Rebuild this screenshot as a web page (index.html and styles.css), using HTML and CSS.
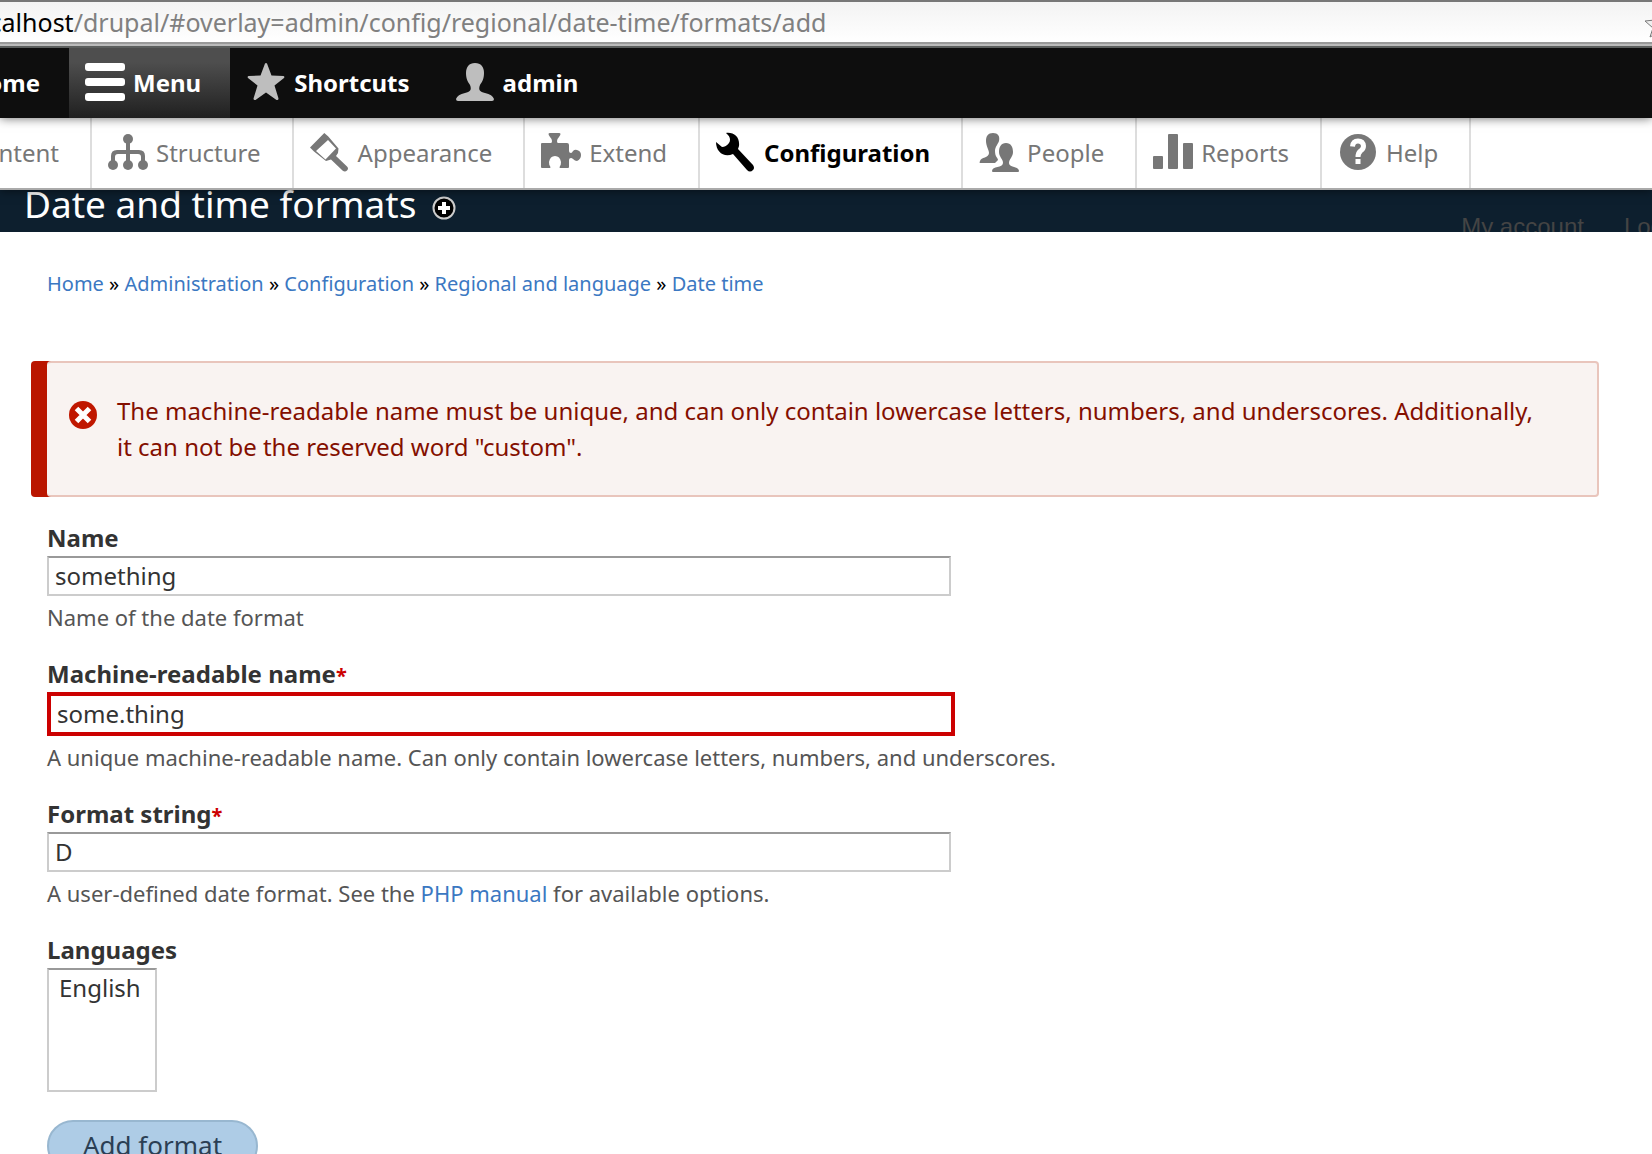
FILE: index.html
```
<!DOCTYPE html>
<html lang="en">
<head>
    <meta charset="UTF-8">
    <meta name="viewport" content="width=device-width, initial-scale=1.0">
    <title>Date and time formats</title>
    <link rel="stylesheet" href="styles.css">
</head>
<body>
    <div class="address-bar">
        <div class="url"><span class="host">localhost</span>/drupal/#overlay=admin/config/regional/date-time/formats/add</div>
        <svg class="bookmark" viewBox="0 0 30 28" aria-hidden="true">
            <path d="M15 1l4 9 10 1-8 7 3 9-9-5-9 5 3-9-8-7 10-1z"/>
        </svg>
    </div>

    <!-- Top toolbar -->
    <nav class="toolbar">
        <a class="tab tab-first" href="#">Home</a>
        <a class="tab active" href="#">
            <svg class="icon" viewBox="0 0 40 40" aria-hidden="true">
                <rect x="0" y="1" width="40" height="8" rx="3"/>
                <rect x="0" y="16" width="40" height="8" rx="3"/>
                <rect x="0" y="31" width="40" height="8" rx="3"/>
            </svg>
            Menu
        </a>
        <a class="tab" href="#">
            <svg class="icon" viewBox="0 0 40 40" aria-hidden="true">
                <path d="M19 1.500q1-1 2 0l4.500 12 12 .5q1.500.5.500 2l-9.500 7.500 4 13q0 2-2 1.500L20 30.500 9.500 38q-2 .5-2-1.500l4-13L2 16q-1-1.500.5-2l12-.5z"/>
            </svg>
            Shortcuts
        </a>
        <a class="tab" href="#">
            <svg class="icon" viewBox="0 0 40 40" aria-hidden="true">
                <path d="M20 1c6 0 9 4 9 10 0 6-2 9-4 12-2 5 0 7 5 8 5 1 8 3 9 6q0 2-2 2H3q-2 0-2-2c1-3 4-5 9-6 5-1 7-3 5-8-2-3-4-6-4-12 0-6 3-10 9-10z"/>
            </svg>
            admin
        </a>
    </nav>

    <!-- Administration menu -->
    <nav class="tray">
        <a class="item item-first" href="#">Content</a>
        <a class="item" href="#">
            <svg class="icon" viewBox="0 0 40 40" aria-hidden="true">
                <circle cx="20" cy="7" r="5"/>
                <path d="M18 10h4v8h9q6 0 6 6v6h-4v-5q0-3-3-3h-8v8h-4v-8h-8q-3 0-3 3v5H3v-6q0-6 6-6h9z"/>
                <circle cx="5" cy="33" r="5"/>
                <circle cx="20" cy="33" r="5"/>
                <circle cx="35" cy="33" r="5"/>
            </svg>
            Structure
        </a>
        <a class="item" href="#">
            <svg class="icon" viewBox="0 0 40 40" aria-hidden="true">
                <path fill-rule="evenodd" d="M0 15.500L14.300 1l4 3.500L28.500 16.500 28 21l-2 3 11 10.500q2 2 0 4t-4.500 0L21 27.500 16 29 4 19.500zM6 19l9.500 8.500L26 16.500 18 8z"/>
            </svg>
            Appearance
        </a>
        <a class="item" href="#">
            <svg class="icon" viewBox="0 0 40 40" aria-hidden="true">
                <path d="M1 11h9q1 0 1-2 0-2-2-4-3-4 0-4h9q3 0 0 4-2 2-2 4 0 2 1 2h9q2 0 2 2v6q0 2 2 2 1 0 2-2 2-2 4-1 4 1 4 5t-4 6q-2 0-4-2-1-1-2-1-2 0-2 2v7q0 1-1 1h-8q-1 0 0-2 1-1 1-4-1-6-6-6t-6 6q0 3 1 4 1 2 0 2H1q-1 0-1-1V12q0-1 1-1z"/>
            </svg>
            Extend
        </a>
        <a class="item current" href="#">
            <svg class="icon" viewBox="0 0 40 40" aria-hidden="true">
                <path d="M10 1c8-1 14 4 13 13l-1 3 15 16q2 3 0 5-3 3-6 0L17 22C8 26 0 20 0 10l6 5q4 0 7-4 3-5-3-10z"/>
            </svg>
            Configuration
        </a>
        <a class="item" href="#">
            <svg class="icon" viewBox="0 0 40 40" aria-hidden="true">
                <path d="M14 1c5 0 7 3 6 8-1 3-4 6-4 10 0 6 3 7 3 9l-3 3H1q-1 0 0-2c1-4 9-3 9-8 0-3-3-7-3-12 0-5 2-8 7-8z"/>
                <path class="front" d="M27 11c5 0 7 4 7 9s-4 7-4 11c0 5 10 3 10 8q0 1-1 1H14q-1 0-1-1c0-5 11-3 11-8 0-4-4-6-4-11s2-9 7-9z"/>
            </svg>
            People
        </a>
        <a class="item" href="#">
            <svg class="icon" viewBox="0 0 40 40" aria-hidden="true">
                <rect x="0" y="24" width="10" height="13" rx="1"/>
                <rect x="15" y="2" width="10" height="35" rx="1"/>
                <rect x="30" y="11" width="10" height="26" rx="1"/>
            </svg>
            Reports
        </a>
        <a class="item" href="#">
            <svg class="icon" viewBox="0 0 40 40" aria-hidden="true">
                <circle cx="20" cy="20" r="18"/>
                <path class="mark" d="M14.500 14.500Q15 9 20 9t5.500 5q0 3-3 5-2.500 2-2.500 6M20 27v5"/>
            </svg>
            Help
        </a>
    </nav>

    <header class="overlay-header">
        <h1 class="title">Date and time formats</h1>
        <button class="add-shortcut" aria-label="Add to shortcuts">
            <svg viewBox="0 0 24 24" aria-hidden="true">
                <circle cx="12" cy="12" r="10.500"/>
                <path d="M12 6v12M6 12h12"/>
            </svg>
        </button>
        <div class="user-links">
            <a href="#">My account</a>
            <a href="#">Log out</a>
        </div>
    </header>

    <main class="content">
        <div class="breadcrumb">
            <a href="#">Home</a> » <a href="#">Administration</a> » <a href="#">Configuration</a> » <a href="#">Regional and language</a> » <a href="#">Date time</a>
        </div>

        <div class="message" role="alert">
            <svg class="message-icon" viewBox="0 0 28 28" aria-hidden="true">
                <circle cx="14" cy="14" r="14"/>
                <path d="M7.500 7.500l13 13M20.500 7.500l-13 13"/>
            </svg>
            <p>The machine-readable name must be unique, and can only contain lowercase letters, numbers, and underscores. Additionally, it can not be the reserved word "custom".</p>
        </div>

        <form class="form">
            <div class="form-item">
                <label for="name">Name</label>
                <input type="text" id="name" value="something">
                <div class="description">Name of the date format</div>
            </div>
            <div class="form-item">
                <label for="machine-name">Machine-readable name<span class="required">*</span></label>
                <input type="text" id="machine-name" class="error" value="some.thing">
                <div class="description">A unique machine-readable name. Can only contain lowercase letters, numbers, and underscores.</div>
            </div>
            <div class="form-item">
                <label for="format">Format string<span class="required">*</span></label>
                <input type="text" id="format" value="D">
                <div class="description">A user-defined date format. See the <a href="#">PHP manual</a> for available options.</div>
            </div>
            <div class="form-item">
                <label for="languages">Languages</label>
                <select id="languages" multiple size="4">
                    <option>English</option>
                </select>
            </div>
            <button class="submit" type="submit">Add format</button>
        </form>
    </main>
</body>
</html>
```

FILE: styles.css
```
* {
    box-sizing: border-box;
}

body {
    margin: 0;
    height: 100vh;
    overflow: hidden;
    background: #fff;
    color: #000;
    font-family: "Noto Sans", "Open Sans", sans-serif;
    font-size: 24px;
}

a {
    color: #3b78c2;
    text-decoration: none;
}

/* Browser address bar */
.address-bar {
    display: flex;
    align-items: center;
    position: relative;
    z-index: 3;
    height: 48px;
    overflow: hidden;
    border-top: 2px solid #777;
    border-bottom: 2px solid #5c5f5e;
    background: linear-gradient(#f3f3f3, #fff 40px, #999 40px, #999 42px, #bbb 42px);
}

.url {
    flex: 1;
    margin-left: -32px;
    padding-bottom: 4px;
    color: #808080;
    font-size: 25px;
    white-space: nowrap;
}

.host {
    color: #000;
}

.bookmark {
    flex: none;
    width: 30px;
    height: 28px;
    margin-right: -22px;
    fill: #eee;
    stroke: #777;
}

/* Toolbar */
.toolbar {
    display: flex;
    position: relative;
    z-index: 2;
    height: 70px;
    background: #0e0e0e;
    box-shadow: 0 0 10px rgba(0, 0, 0, 0.6);
}

.tab,
.item {
    display: flex;
    align-items: center;
    gap: 8px;
    padding: 0 31px 2px 16px;
    white-space: nowrap;
}

.tab {
    padding-right: 29px;
    color: #fff;
    font-weight: bold;
    fill: #bebebe;
}

.tab.active {
    background: linear-gradient(#4e4e4e 20%, #202020);
    fill: #fff;
}

.tab-first,
.item-first {
    justify-content: flex-end;
    overflow: hidden;
    width: 69px;
}

.icon {
    flex: none;
    width: 40px;
    height: 40px;
}

.tray {
    display: flex;
    position: relative;
    z-index: 1;
    height: 72px;
    background: #fff;
    border-bottom: 2px solid #aaa;
    box-shadow: 0 0 10px rgba(0, 0, 0, 0.6);
}

.item {
    border-right: 2px solid #ddd;
    color: #777;
    fill: #777;
}

.item-first {
    width: 92px;
}

.item.current {
    color: #000;
    fill: #000;
    font-weight: bold;
}

.mark {
    fill: none;
    stroke: #fff;
    stroke-width: 5;
}

.front {
    stroke: #fff;
    stroke-width: 4;
    paint-order: stroke;
}

/* Overlay title */
.overlay-header {
    display: flex;
    align-items: center;
    height: 42px;
    padding-left: 24px;
    overflow: hidden;
    background: #0d1f2e;
}

.title {
    margin: 0;
    padding-bottom: 14px;
    color: #fff;
    font-size: 37px;
    font-weight: normal;
    line-height: 40px;
    white-space: nowrap;
}

.add-shortcut {
    width: 24px;
    height: 24px;
    margin: 0 0 6px 16px;
    padding: 0;
    border: 0;
    background: none;
}

.add-shortcut svg {
    display: block;
    fill: #000;
    stroke: #ccc;
    stroke-width: 2;
}

.add-shortcut path {
    stroke: #fff;
    stroke-width: 4;
}

.user-links {
    display: flex;
    gap: 40px;
    margin-left: auto;
    margin-right: -52px;
    padding-top: 32px;
    font-family: "Liberation Sans", sans-serif;
    font-size: 24px;
    white-space: nowrap;
}

.user-links a {
    color: #444;
}

/* Page */
.content {
    padding: 36px 53px 0 47px;
}

.breadcrumb {
    font-size: 20px;
    line-height: 32px;
}

.message {
    display: flex;
    gap: 20px;
    margin-top: 61px;
    padding: 30px 44px 30px 22px;
    border: 2px solid #e9c5bc;
    border-left: 0;
    border-radius: 4px;
    background: #f9f3f1;
    box-shadow: -16px 0 0 #ba1600;
    color: #840f00;
    line-height: 36px;
}

.message p {
    margin: 0;
}

.message-icon {
    flex: none;
    width: 28px;
    height: 28px;
    margin-top: 8px;
    fill: #c01700;
    stroke: #fff;
    stroke-width: 5;
}

.message-icon circle {
    stroke: none;
}

.form {
    padding-top: 24px;
    color: #333;
}

.form-item {
    margin-bottom: 24px;
}

label {
    display: block;
    padding-bottom: 2px;
    font-weight: bold;
    line-height: 33px;
}

.required {
    color: #c00;
    font-size: 20px;
    line-height: 20px;
}

input,
select {
    display: block;
    border: 2px solid #ccc;
    border-top-color: #999;
    border-radius: 0;
    outline: none;
    background: #fff;
    color: #333;
    font-family: inherit;
    font-size: 24px;
}

input {
    width: 904px;
    height: 40px;
    padding: 0 6px 2px;
}

input.error {
    width: 908px;
    height: 44px;
    border: 4px solid #c00;
}

.description {
    padding-top: 5px;
    color: #555;
    font-size: 22px;
    line-height: 32px;
}

select {
    width: 110px;
    height: 124px;
    padding: 1px 8px;
    overflow: hidden;
}

option {
    padding: 0 2px;
}

.submit {
    height: 52px;
    margin-top: 4px;
    padding: 0 34px 2px;
    border: 2px solid #98b7d0;
    border-radius: 26px;
    background: #aecce6;
    color: #2b3f54;
    font-family: inherit;
    font-size: 26px;
}
```
